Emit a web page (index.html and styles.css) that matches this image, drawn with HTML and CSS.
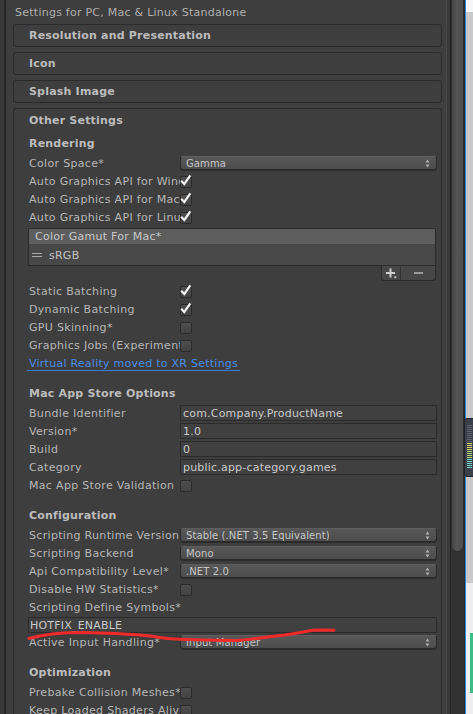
FILE: index.html
```html
<!DOCTYPE html>
<html>
<head>
<meta charset="utf-8">
<link rel="stylesheet" href="styles.css">
</head>
<body>
<div class="window">
  <div class="strip"></div>
  <div class="inspector">
    <div class="title">Settings for PC, Mac &amp; Linux Standalone</div>
    <div class="foldout"><div class="foldout-head">Resolution and Presentation</div></div>
    <div class="foldout"><div class="foldout-head">Icon</div></div>
    <div class="foldout"><div class="foldout-head">Splash Image</div></div>
    <div class="foldout open">
      <div class="foldout-head">Other Settings</div>
      <div class="body">
        <div class="section">Rendering</div>
        <div class="row"><span class="label">Color Space*</span><div class="popup"><span class="ptext">Gamma</span><svg class="arrows" width="5" height="9" viewBox="0 0 5 9"><path d="M2.5 0.5 L4.5 3.5 L0.5 3.5 Z M0.5 5.5 L4.5 5.5 L2.5 8.5 Z" fill="#b0b0b0"/></svg></div></div>
        <div class="row"><span class="label">Auto Graphics API for Windows</span><div class="check"><svg width="12" height="12" viewBox="0 0 12 12"><path d="M1.2 4.8 L4.3 8 L10.3 -0.6" fill="none" stroke="#f2f2f2" stroke-width="2.2"/></svg></div></div>
        <div class="row"><span class="label">Auto Graphics API for Mac</span><div class="check"><svg width="12" height="12" viewBox="0 0 12 12"><path d="M1.2 4.8 L4.3 8 L10.3 -0.6" fill="none" stroke="#f2f2f2" stroke-width="2.2"/></svg></div></div>
        <div class="row"><span class="label">Auto Graphics API for Linux</span><div class="check"><svg width="12" height="12" viewBox="0 0 12 12"><path d="M1.2 4.8 L4.3 8 L10.3 -0.6" fill="none" stroke="#f2f2f2" stroke-width="2.2"/></svg></div></div>
        <div class="list">
          <div class="list-box">
            <div class="list-head">Color Gamut For Mac*</div>
            <div class="list-item"><span class="handle"></span><span>sRGB</span></div>
          </div>
          <div class="list-foot">
            <div class="lf-btn"><svg width="14" height="12" viewBox="0 0 14 12"><path d="M2 5 H11 V7 H2 Z M5.5 1.5 H7.5 V10.5 H5.5 Z" fill="#cfcfcf"/><path d="M9.5 9.5 H13 L11.25 11.5 Z" fill="#cfcfcf"/></svg></div>
            <div class="lf-btn"><svg width="12" height="12" viewBox="0 0 12 12"><path d="M2 5 H11 V7 H2 Z" fill="#9a9a9a"/></svg></div>
          </div>
        </div>
        <div class="row"><span class="label">Static Batching</span><div class="check"><svg width="12" height="12" viewBox="0 0 12 12"><path d="M1.2 4.8 L4.3 8 L10.3 -0.6" fill="none" stroke="#f2f2f2" stroke-width="2.2"/></svg></div></div>
        <div class="row"><span class="label">Dynamic Batching</span><div class="check"><svg width="12" height="12" viewBox="0 0 12 12"><path d="M1.2 4.8 L4.3 8 L10.3 -0.6" fill="none" stroke="#f2f2f2" stroke-width="2.2"/></svg></div></div>
        <div class="row"><span class="label">GPU Skinning*</span><div class="check"></div></div>
        <div class="row"><span class="label">Graphics Jobs (Experimental)*</span><div class="check"></div></div>
        <div class="row"><span class="link">Virtual Reality moved to XR Settings</span></div>
        <div class="spacer"></div>
        <div class="section">Mac App Store Options</div>
        <div class="row"><span class="label">Bundle Identifier</span><div class="field">com.Company.ProductName</div></div>
        <div class="row"><span class="label">Version*</span><div class="field">1.0</div></div>
        <div class="row"><span class="label">Build</span><div class="field">0</div></div>
        <div class="row"><span class="label">Category</span><div class="field">public.app-category.games</div></div>
        <div class="row"><span class="label">Mac App Store Validation</span><div class="check"></div></div>
        <div class="spacer"></div>
        <div class="section">Configuration</div>
        <div class="row"><span class="label">Scripting Runtime Version</span><div class="popup"><span class="ptext">Stable (.NET 3.5 Equivalent)</span><svg class="arrows" width="5" height="9" viewBox="0 0 5 9"><path d="M2.5 0.5 L4.5 3.5 L0.5 3.5 Z M0.5 5.5 L4.5 5.5 L2.5 8.5 Z" fill="#b0b0b0"/></svg></div></div>
        <div class="row"><span class="label">Scripting Backend</span><div class="popup"><span class="ptext">Mono</span><svg class="arrows" width="5" height="9" viewBox="0 0 5 9"><path d="M2.5 0.5 L4.5 3.5 L0.5 3.5 Z M0.5 5.5 L4.5 5.5 L2.5 8.5 Z" fill="#b0b0b0"/></svg></div></div>
        <div class="row"><span class="label">Api Compatibility Level*</span><div class="popup"><span class="ptext">.NET 2.0</span><svg class="arrows" width="5" height="9" viewBox="0 0 5 9"><path d="M2.5 0.5 L4.5 3.5 L0.5 3.5 Z M0.5 5.5 L4.5 5.5 L2.5 8.5 Z" fill="#b0b0b0"/></svg></div></div>
        <div class="row"><span class="label">Disable HW Statistics*</span><div class="check"></div></div>
        <div class="row"><span class="label wide">Scripting Define Symbols*</span></div>
        <div class="field full">HOTFIX_ENABLE</div>
        <div class="row"><span class="label">Active Input Handling*</span><div class="popup"><span class="ptext">Input Manager</span><svg class="arrows" width="5" height="9" viewBox="0 0 5 9"><path d="M2.5 0.5 L4.5 3.5 L0.5 3.5 Z M0.5 5.5 L4.5 5.5 L2.5 8.5 Z" fill="#b0b0b0"/></svg></div></div>
        <div class="spacer"></div>
        <div class="section">Optimization</div>
        <div class="row"><span class="label">Prebake Collision Meshes*</span><div class="check"></div></div>
        <div class="row"><span class="label">Keep Loaded Shaders Alive*</span><div class="check"></div></div>
      </div>
    </div>
  </div>
  <div class="gutter"></div>
  <div class="scrollbar"><div class="thumb"></div></div>
  <div class="edge"></div>
  <div class="outside">
    <div class="o-top"></div>
    <div class="o-mid"></div>
    <div class="o-bot"><div class="green"></div></div>
  </div>
  <div class="widget">
    <svg width="12" height="59" viewBox="0 0 12 59">
      <g fill="#5b606a">
        <rect x="3" y="7" width="5" height="1"/><rect x="3" y="9" width="5" height="1"/><rect x="3" y="11" width="5" height="1"/>
        <rect x="3" y="13" width="5" height="1"/><rect x="3" y="15" width="5" height="1"/><rect x="3" y="17" width="5" height="1"/>
        <rect x="3" y="19" width="5" height="1"/><rect x="3" y="21" width="5" height="1"/><rect x="3" y="23" width="5" height="1"/>
      </g>
      <g fill="#d8d46a">
        <rect x="3" y="25" width="5" height="1"/><rect x="3" y="27" width="5" height="1"/><rect x="3" y="29" width="5" height="1"/><rect x="3" y="31" width="5" height="1"/>
      </g>
      <g fill="#b2d77a">
        <rect x="3" y="33" width="5" height="1"/><rect x="3" y="35" width="5" height="1"/><rect x="3" y="37" width="5" height="1"/><rect x="3" y="39" width="5" height="1"/>
      </g>
      <g fill="#6fd6c6">
        <rect x="3" y="41" width="5" height="1"/><rect x="3" y="43" width="5" height="1"/><rect x="3" y="45" width="5" height="1"/><rect x="3" y="47" width="5" height="1"/><rect x="3" y="49" width="5" height="1"/>
      </g>
    </svg>
  </div>
  <svg class="scribble" width="473" height="714" viewBox="0 0 473 714">
    <polyline points="29,638.5 40,636 52,634 67,632.8 85,632.6 100,633 115,633.5 128,634.2 140,635 150,636 160,637.5 168,638.5 180,639.2 195,639.8 215,640.3 236,640.6 246,639.8 256,638.5 266,637.2 276,636 285,635 293,633.8 303,632 313,630.2 322,630 334,630.3" fill="none" stroke="#f02a2a" stroke-width="3" stroke-linecap="round" stroke-linejoin="round"/>
  </svg>
</div>
</body>
</html>
```
FILE: styles.css
```css
* { box-sizing: border-box; }
html, body { margin: 0; padding: 0; }
body {
  width: 473px;
  height: 714px;
  overflow: hidden;
  background: #3e3e3e;
  font-family: "DejaVu Sans", Verdana, sans-serif;
  font-size: 11px;
  color: #b6b6b6;
}
.window {
  display: flex;
  height: 714px;
  position: relative;
  overflow: hidden;
}
.strip {
  width: 6px;
  flex: none;
  background: #393939;
  border-right: 2px solid #262626;
}
.inspector {
  width: 440px;
  flex: none;
  background: #3e3e3e;
  overflow: hidden;
}
.title {
  height: 24px;
  padding-top: 1px;
  line-height: 24px;
  padding-left: 9px;
  color: #b0b0b0;
  letter-spacing: 0.25px;
  white-space: nowrap;
  overflow: hidden;
}
.foldout {
  margin: 0 4px 5px 7px;
  height: 23px;
  border: 1px solid #2a2a2a;
  border-radius: 3px;
  background: #3e3e3e;
}
.foldout-head {
  height: 21px;
  line-height: 22px;
  padding-left: 15px;
  font-weight: bold;
  color: #bcbcbc;
  letter-spacing: 0.2px;
  overflow: hidden;
}
.foldout.open {
  height: auto;
  border-bottom: none;
  border-radius: 3px 3px 0 0;
}
.foldout.open .foldout-head {
  height: 24px;
  line-height: 23px;
}
.body {
  padding: 0 4px 0 14px;
}
.section {
  height: 21px;
  line-height: 22px;
  padding-left: 1px;
  font-weight: bold;
  color: #bcbcbc;
  letter-spacing: 0.2px;
  overflow: hidden;
}
.spacer { height: 11px; }
.row {
  display: flex;
  height: 18px;
}
.label {
  flex: none;
  width: 152px;
  height: 18px;
  padding-left: 1px;
  padding-top: 1px;
  line-height: 18px;
  white-space: nowrap;
  overflow: hidden;
  letter-spacing: 0.32px;
}
.label.wide { width: auto; }
.popup {
  flex: 1;
  height: 14px;
  margin-top: 2px;
  display: flex;
  align-items: center;
  justify-content: space-between;
  padding: 0 6px 0 5px;
  border: 1px solid #2a2a2a;
  border-top-color: #5e5e5e;
  border-radius: 3px;
  background: linear-gradient(#585858, #4c4c4c);
  box-shadow: 0 1px 0 #2c2c2c;
  font-size: 10px;
  color: #c6c6c6;
  letter-spacing: 0.1px;
  white-space: nowrap;
}
.ptext { line-height: 12px; margin-top: 2px; }
.arrows { display: block; flex: none; }
.check {
  flex: none;
  width: 12px;
  height: 12px;
  margin-top: 4px;
  border: 1px solid #2b2b2b;
  border-radius: 2px;
  background: linear-gradient(#4e4e4e, #434343);
}
.check svg {
  display: block;
  margin: -1px 0 0 -1px;
  overflow: visible;
}
.field {
  flex: 1;
  height: 16px;
  margin-top: 1px;
  padding-left: 2px;
  padding-top: 1px;
  line-height: 14px;
  border: 1px solid #2b2b2b;
  background: #404040;
  color: #cacaca;
  letter-spacing: 0.2px;
  white-space: nowrap;
  overflow: hidden;
}
.field.full {
  margin: 1px 0 0 0;
  padding-left: 1px;
}
.link {
  display: inline-block;
  height: 14px;
  margin: 3px 0 0 -1px;
  padding: 0 2px;
  line-height: 13px;
  color: #4b8ce6;
  border-bottom: 1px solid #3b7ad8;
  letter-spacing: 0.25px;
  white-space: nowrap;
}
.list {
  margin: 2px 1px 1px 0;
}
.list-box {
  border: 1px solid #2a2a2a;
  border-radius: 3px 3px 0 0;
}
.list-head {
  height: 15px;
  line-height: 16px;
  padding-left: 6px;
  background: #5e5e5e;
  color: #c8c8c8;
  letter-spacing: 0.25px;
  overflow: hidden;
}
.list-item {
  height: 21px;
  display: flex;
  align-items: center;
  padding-top: 1px;
  background: #484848;
  color: #c2c2c2;
  letter-spacing: 0.25px;
}
.handle {
  width: 10px;
  height: 4px;
  margin: 0 7px 0 3px;
  border-top: 1px solid #a8a8a8;
  border-bottom: 1px solid #a8a8a8;
}
.list-foot {
  margin: -1px 0 0 auto;
  width: 55px;
  height: 16px;
  display: flex;
  border: 1px solid #2a2a2a;
  border-top-color: #2e2e2e;
  border-radius: 0 0 3px 3px;
  background: #474747;
}
.lf-btn {
  flex: 1;
  display: flex;
  align-items: center;
  justify-content: center;
}
.lf-btn:first-child {
  border-right: 1px solid #333;
  flex: none;
  width: 19px;
}
.gutter {
  width: 5px;
  flex: none;
  background: #393939;
  border-left: 1px solid #4a4a4a;
  border-right: 1px solid #242424;
}
.scrollbar {
  width: 14px;
  flex: none;
  background: #323232;
  border-right: 1px solid #2a2a2a;
}
.thumb {
  height: 552px;
  border-radius: 0 0 6px 6px;
  background: linear-gradient(to right, #474747, #535353 40%, #4e4e4e);
  border: 1px solid #2d2d2d;
  border-top: none;
}
.edge {
  width: 1px;
  flex: none;
  background: #2b87e2;
}
.outside {
  width: 7px;
  flex: none;
  display: flex;
  flex-direction: column;
}
.o-top { height: 12px; background: #f6f6f6; }
.o-mid { height: 571px; background: #c9c9c9; }
.o-bot { flex: 1; background: #efefef; padding: 50px 0 0 4px; }
.green { height: 60px; background: #3cbd87; }
.widget {
  position: absolute;
  left: 464px;
  top: 418px;
  width: 12px;
  height: 59px;
  border: 1px solid #20232a;
  border-radius: 3px;
  background: #3a3f4a;
  overflow: hidden;
}
.widget svg { display: block; margin: -1px 0 0 -1px; }
.scribble {
  position: absolute;
  left: 0;
  top: 0;
  pointer-events: none;
}
```
